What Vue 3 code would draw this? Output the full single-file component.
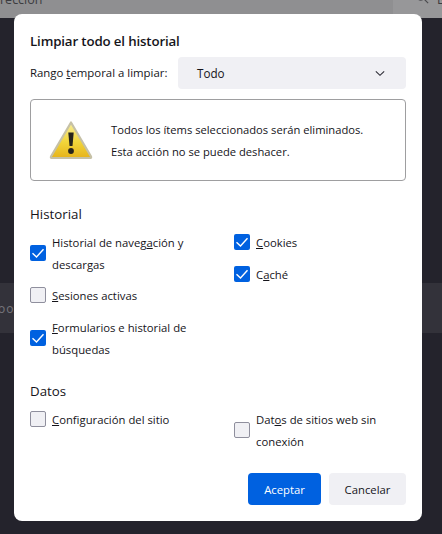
<script setup>
const leftHist = [
  { before: 'Historial de naveg', key: 'a', after: 'ción y descargas', on: true, two: true },
  { before: '', key: 'S', after: 'esiones activas', on: false },
  { before: '', key: 'F', after: 'ormularios e historial de búsquedas', on: true, two: true },
]
const rightHist = [
  { before: '', key: 'C', after: 'ookies', on: true },
  { before: 'C', key: 'a', after: 'ché', on: true },
]
</script>

<template>
  <div class="page">
    <div class="topbar">
      <span class="addr">rección</span>
      <div class="search">
        <svg class="lens" viewBox="0 0 16 16" width="14" height="14"><circle cx="6.5" cy="6.5" r="5" fill="none" stroke="#4a4a4e" stroke-width="1.3"/><path d="M10.3 10.3 15 15" stroke="#4a4a4e" stroke-width="1.3"/></svg>
        <span class="addr">B</span>
      </div>
    </div>
    <div class="band"><span class="bandtext">oo</span></div>

    <div class="dialog">
      <h1 class="title">Limpiar todo el historial</h1>
      <div class="range">
        <span class="range-label">Rango <u>t</u>emporal a limpiar:</span>
        <div class="select">
          <span>Todo</span>
          <svg viewBox="0 0 12 8" width="10" height="7"><path d="M1 1.5 6 6.2 11 1.5" fill="none" stroke="#2b2a33" stroke-width="1.3"/></svg>
        </div>
      </div>

      <div class="warning">
        <svg class="warn-icon" viewBox="0 0 44 40" width="44" height="40">
          <defs>
            <linearGradient id="warnFill" x1="0" y1="0" x2="0" y2="1">
              <stop offset="0" stop-color="#f8ee9c"/>
              <stop offset="0.55" stop-color="#f1d53a"/>
              <stop offset="1" stop-color="#e6b31a"/>
            </linearGradient>
          </defs>
          <path d="M22 2.5 42 36.5 Q42.5 38 41 38 H3 Q1.5 38 2 36.5 Z" fill="url(#warnFill)" stroke="#c6c1a6" stroke-width="2.2" stroke-linejoin="round"/>
          <path d="M19.3 12.5 H24.7 L23.5 26 H20.5 Z" fill="#26241c"/>
          <circle cx="22" cy="31" r="2.9" fill="#26241c"/>
        </svg>
        <div class="warn-text">
          <p>Todos los ítems seleccionados serán eliminados.</p>
          <p>Esta acción no se puede deshacer.</p>
        </div>
      </div>

      <h2 class="section first">Historial</h2>
      <div class="columns hist">
        <div class="col col-left">
          <label v-for="item in leftHist" :key="item.after" class="check">
            <span class="box" :class="{ on: item.on }">
              <svg v-if="item.on" viewBox="0 0 16 16" width="16" height="16"><path d="M2.5 8.2 6.5 12 13.5 4.2" fill="none" stroke="#fff" stroke-width="1.4"/></svg>
            </span>
            <span class="text" :class="{ two: item.two }">{{ item.before }}<u>{{ item.key }}</u>{{ item.after }}</span>
          </label>
        </div>
        <div class="col col-right">
          <label v-for="item in rightHist" :key="item.after" class="check">
            <span class="box on">
              <svg viewBox="0 0 16 16" width="16" height="16"><path d="M2.5 8.2 6.5 12 13.5 4.2" fill="none" stroke="#fff" stroke-width="1.4"/></svg>
            </span>
            <span class="text">{{ item.before }}<u>{{ item.key }}</u>{{ item.after }}</span>
          </label>
        </div>
      </div>

      <h2 class="section second">Datos</h2>
      <div class="columns data">
        <div class="col col-left">
          <label class="check">
            <span class="box"></span>
            <span class="text"><u>C</u>onfiguración del sitio</span>
          </label>
        </div>
        <div class="col col-right">
          <label class="check">
            <span class="box"></span>
            <span class="text two">Dat<u>o</u>s de sitios web sin conexión</span>
          </label>
        </div>
      </div>

      <div class="actions">
        <button class="btn primary">Aceptar</button>
        <button class="btn">Cancelar</button>
      </div>
    </div>
  </div>
</template>

<style>
html, body { margin: 0; background: #24232c; }
</style>

<style scoped>
.page {
  position: relative;
  width: 442px;
  height: 534px;
  overflow: hidden;
  background: #24232c;
  font-family: "Open Sans", "Noto Sans", sans-serif;
  color: #15141a;
}
.topbar {
  height: 18px;
  background: #8f8f91;
  display: flex;
  justify-content: space-between;
  align-items: flex-start;
  overflow: hidden;
}
.addr { font-size: 12.5px; color: #3c3c40; line-height: 14px; margin-top: -7px; }
.search { width: 49px; height: 18px; display: flex; gap: 8px; align-items: flex-start; background: #979799; padding-left: 22px; box-sizing: border-box; }
.lens { margin-top: -10px; flex: none; }
.band { position: absolute; left: 0; right: 0; top: 283px; height: 50px; background: #33323a; display: flex; align-items: center; }
.bandtext { color: #77767c; font-size: 12px; position: relative; left: -2px; letter-spacing: 1px; }

.dialog {
  position: absolute;
  left: 14px;
  top: 14px;
  width: 408px;
  height: 507px;
  box-sizing: border-box;
  padding: 18px 16px 0;
  background: #fff;
  border-radius: 8px;
}
.title {
  margin: 0;
  font-size: 13.3px;
  font-weight: 600;
  letter-spacing: -0.15px;
  line-height: 18px;
}
.range { display: flex; align-items: center; margin-top: 7px; justify-content: space-between; }
.range-label { font-size: 11.4px; line-height: 16px; }
.select {
  width: 228px;
  height: 32px;
  box-sizing: border-box;
  padding: 0 21px 0 19px;
  background: #f0f0f4;
  border-radius: 4px;
  display: flex;
  align-items: center;
  justify-content: space-between;
  font-size: 11.7px;
}
.warning {
  margin-top: 10px;
  height: 82px;
  box-sizing: border-box;
  border: 1px solid #9e9ea0;
  border-radius: 4px;
  display: flex;
  align-items: center;
  padding: 2px 0 0 18px;
  gap: 18px;
}
.warn-icon { flex: none; margin-top: -2px; }
.warn-text p { margin: 0; font-size: 11.2px; line-height: 22px; }
.section { margin: 0; font-size: 13.3px; font-weight: 500; line-height: 18px; }
.section.first { margin-top: 24px; }
.section.second { margin-top: 13px; }
.columns { display: flex; }
.columns.hist { margin-top: 7px; }
.columns.data { margin-top: 7px; }
.col { display: flex; flex-direction: column; }
.col-left { width: 204px; }
.col-right { width: 171px; }
.check { display: flex; align-items: center; gap: 6px; margin-bottom: 8px; }
.col-left .check:first-child { margin-bottom: 7px; }
.box {
  flex: none;
  width: 16px;
  height: 16px;
  box-sizing: border-box;
  border: 1px solid #8f8f9d;
  border-radius: 2px;
  background: #f0f0f4;
  display: block;
}
.box.on { border: 0; background: #0061e0; }
.box svg { display: block; }
.text { font-size: 11.3px; line-height: 22px; margin-top: 2px; }
.actions {
  position: absolute;
  right: 16px;
  bottom: 16px;
  display: flex;
  gap: 8px;
}
.btn {
  width: 77px;
  height: 32px;
  border: 0;
  padding: 0;
  border-radius: 4px;
  background: #f0f0f4;
  color: #15141a;
  font: 11.3px "Open Sans", "Noto Sans", sans-serif;
}
.btn.primary { width: 73px; background: #0061e0; color: #fff; }
</style>
